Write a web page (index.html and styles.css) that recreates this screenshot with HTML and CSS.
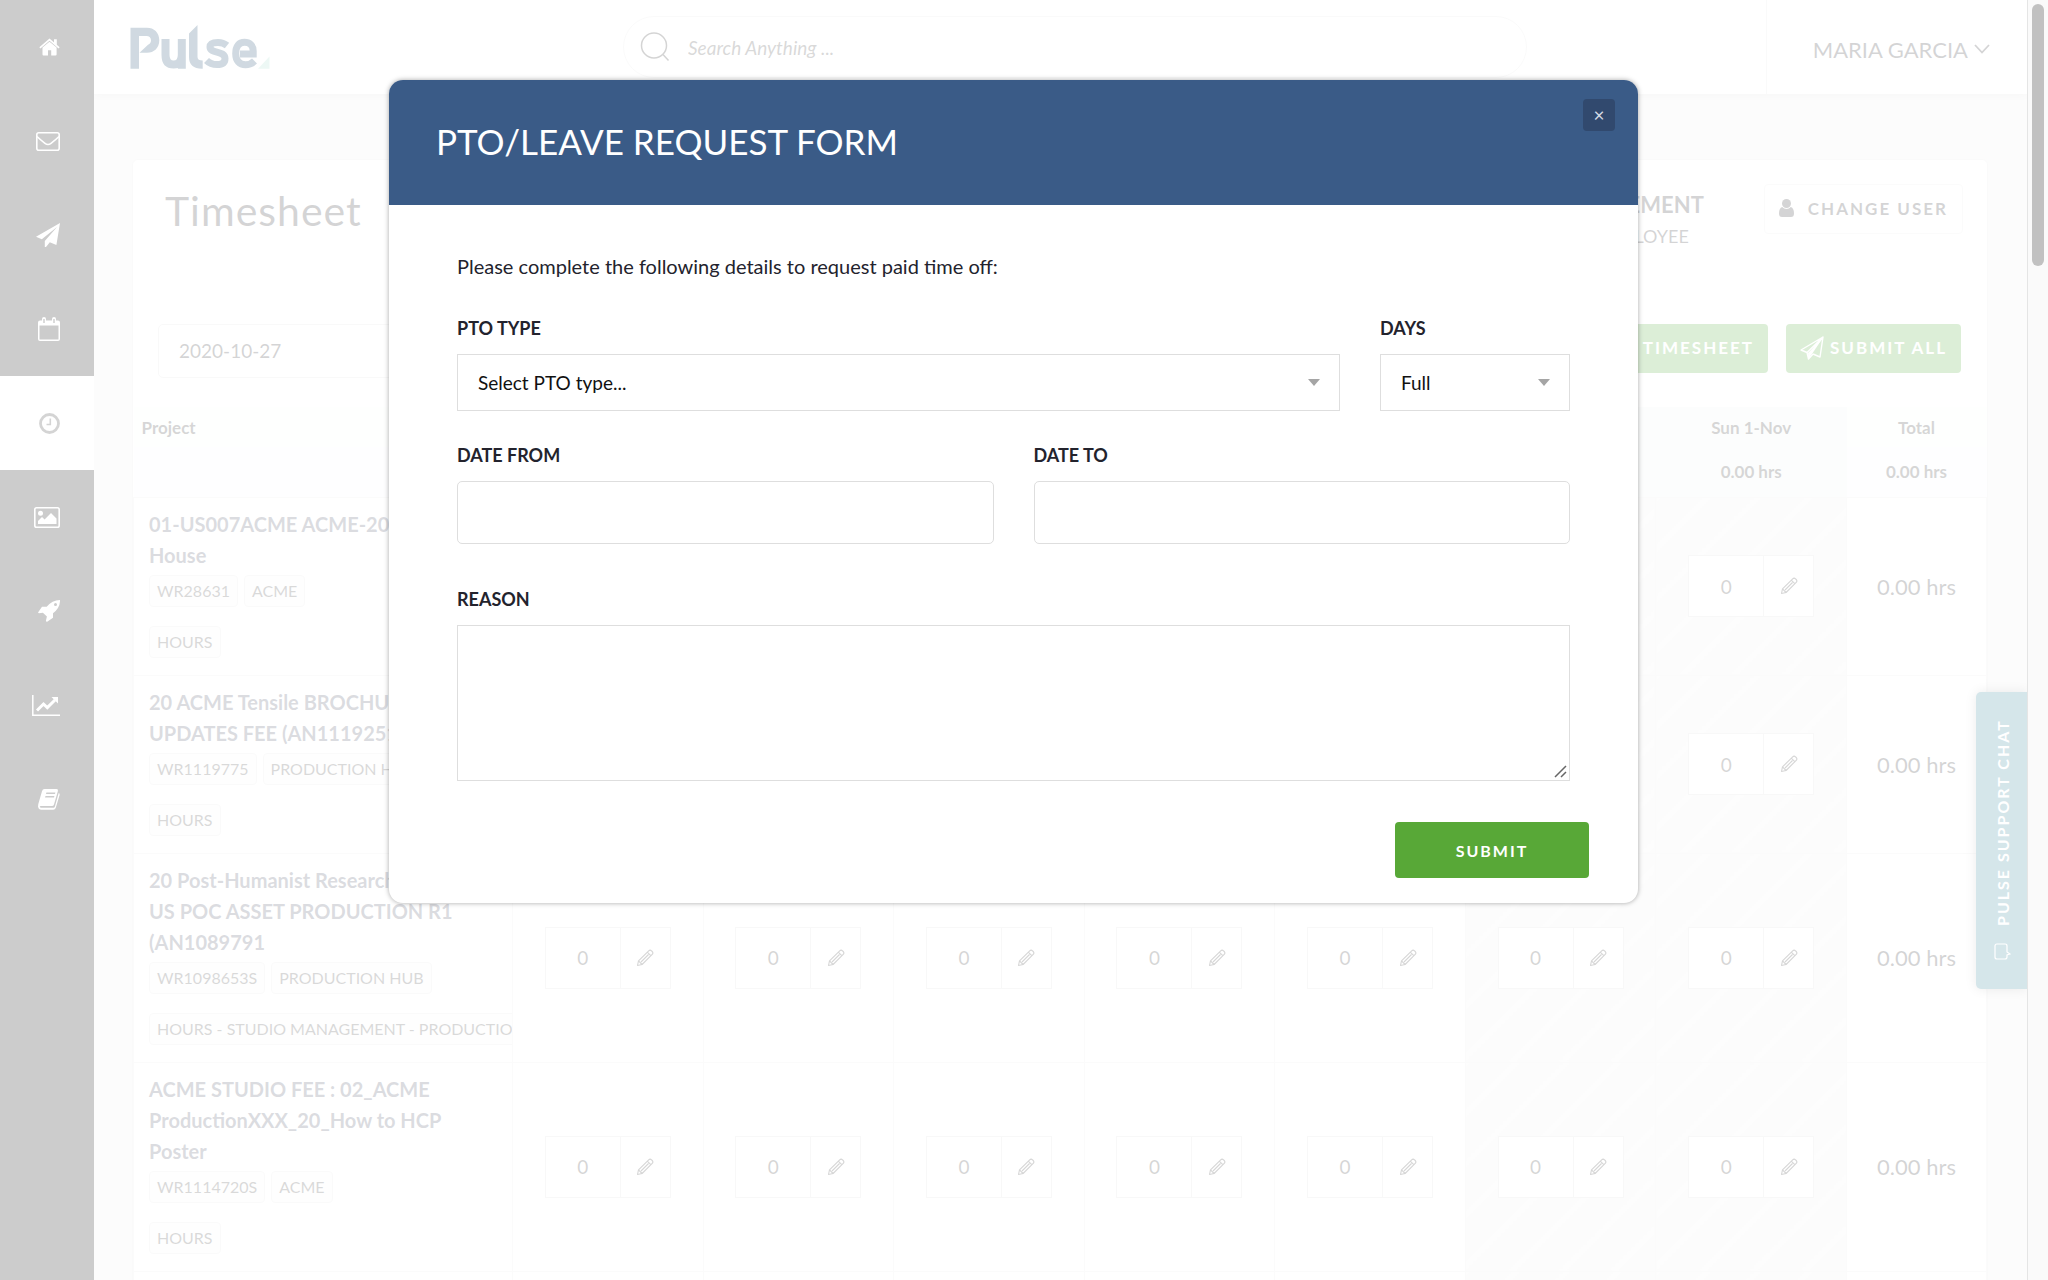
FILE: index.html
```html
<!DOCTYPE html>
<html lang="en">
<head>
<meta charset="utf-8">
<title>Pulse - Timesheet</title>
<link rel="stylesheet" href="styles.css">
</head>
<body>
<svg class="defs" aria-hidden="true">
  <symbol id="pencil" viewBox="0 0 18 18"><path d="M1.500 16.500l1-4.600L12.700 1.800a2 2 0 0 1 2.800 0l.7.700a2 2 0 0 1 0 2.800L6.100 15.500zM11.300 3.200l3.500 3.500M2.500 11.900l3.600 3.600M5 13L12.500 5.500" fill="none" stroke="currentColor" stroke-width="1.100" stroke-linejoin="round"/></symbol>
</svg>
<div class="app">
  <nav class="sidebar" aria-label="Main">
    <a class="nav-item" href="#home" aria-label="Home"><svg width="21" height="18" viewBox="0 0 21 18"><path d="M10.500 3.800L3.500 9.600V16.500q0 1 1 1H9v-5.300h3.200v5.300h4.400q1 0 1-1V9.600z"/><path d="M.9 9.800L10.500 1.700l9.600 8.100" fill="none" stroke="currentColor" stroke-width="1.700"/><path d="M15 1.200h2.800v6L15 4.800z"/></svg></a>
    <a class="nav-item" href="#mail" aria-label="Mail"><svg width="24" height="19" viewBox="0 0 24 19"><g fill="none" stroke="currentColor" stroke-width="1.600"><rect x=".8" y=".8" width="22.400" height="17.400" rx="2"/><path d="M1 4.500q3 3 8 6.800 3 2.300 6 0 5-3.800 8-6.800"/></g></svg></a>
    <a class="nav-item" href="#send" aria-label="Send"><svg width="24" height="24" viewBox="0 0 24 24"><path d="M24 0l-3.600 22-6.600-2.700L10 24H8.800v-6L21 4 5.800 16.200 0 13.700z"/></svg></a>
    <a class="nav-item" href="#calendar" aria-label="Calendar"><svg width="22" height="24" viewBox="0 0 22 24"><path d="M2 3.500h2V2a2 2 0 0 1 4 0v1.500h6V2a2 2 0 0 1 4 0v1.500h2q2 0 2 2V22q0 2-2 2H2q-2 0-2-2V5.500q0-2 2-2zM1.500 8.500v14h19v-14zM5.300 2v4h1.400V2zm10 0v4h1.400V2z" fill-rule="evenodd"/></svg></a>
    <a class="nav-item active" href="#time" aria-label="Timesheet"><svg width="21" height="21" viewBox="0 0 21 21"><g fill="none" stroke="currentColor"><circle cx="10.500" cy="10.500" r="9" stroke-width="2.800"/><path d="M11.300 5.500v6H7.500" stroke-width="1.600"/></g></svg></a>
    <a class="nav-item" href="#images" aria-label="Images"><svg width="26" height="21" viewBox="0 0 26 21"><rect x=".8" y=".8" width="24.400" height="19.400" rx="1.800" fill="none" stroke="currentColor" stroke-width="1.600"/><circle cx="6.500" cy="6.300" r="2.500"/><path d="M4 17v-3l4-4 2.600 2.500L17 6l5.500 5.500V17z"/></svg></a>
    <a class="nav-item" href="#launch" aria-label="Launch"><svg width="22" height="22" viewBox="0 0 22 22"><path d="M22 0q.3 7.500-7 13.200v4.600L8.800 22l-.9-1.200 1-4.300-4-3.800-4 .6L0 12.500l4-5.700h4.700Q14 .2 22 0zM17.500 3a1.500 1.500 0 1 0 0 3 1.500 1.500 0 0 0 0-3z" fill-rule="evenodd"/></svg></a>
    <a class="nav-item" href="#reports" aria-label="Reports"><svg width="28" height="21" viewBox="0 0 28 21"><path d="M.8 0v20.200H28" fill="none" stroke="currentColor" stroke-width="1.500"/><path d="M5 15.500l6.500-6.500 3.800 3.600L23 5" fill="none" stroke="currentColor" stroke-width="3"/><path d="M19.500 2H26v6.500z"/></svg></a>
    <a class="nav-item" href="#library" aria-label="Library"><svg width="22" height="21" viewBox="0 0 22 21"><path d="M6.500 0h12q2 0 1.400 2L16 15.500q-.5 1.500-2 1.500H3q-1.500 0-1.200 1 .2.800 1.500.8h12.200q1 0 1.400-1.200L20.700 4q1.300.5.9 2L17.800 18.800q-.6 2-2.600 2H3q-2.600-.3-3-3L.3 15 4 2.200Q4.600 0 6.500 0zM8.400 3.600L8 5h9l.4-1.400zM7.500 7L7 8.400h9l.4-1.400z" fill-rule="evenodd"/></svg></a>
  </nav>
  <div class="main">
    <header class="topbar">
      <a class="logo" href="#home" aria-label="Pulse"><svg width="140" height="46" viewBox="0 0 140 46">
        <g fill="#154468"><path d="M.5 3.700H17C24 3.700 29.300 8.500 29.300 16.200S24 28.700 17 28.700H9.500L18 20.700C20 20 21 18.500 21 16.200 21 13.500 19 12 16.500 12H9V44.700H.5z"/><path d="M59 9.500L67.500 1V33q0 3.500 5.200 3.500v8.200Q59 45 59 33z"/></g>
        <g fill="none" stroke="#154468" stroke-width="8"><path d="M35.500 15v16q0 9.500 8.100 9.500T51.800 31V15M51.800 30v14.700"/><path d="M97 21.500C94.500 19.500 92 18.400 88 18.400c-5 0-8 1.600-8 4.600 0 7 15 3 15 11.500 0 4.200-3 6.100-8 6.100-4.500 0-7.500-1.100-10.500-4.100" stroke-width="7"/><path d="M110 30h13.200v-3c0-5.500-3.700-8.700-8.700-8.700-5.500 0-8.800 3.700-8.800 11.200s3.800 11.200 9.800 11.200c3.500 0 6.500-1.200 9-3.700" stroke-width="7"/></g>
        <path d="M139.500 32.500v12.200H128z" fill="#a5dcca"/></svg></a>
      <label class="search"><svg width="30" height="31" viewBox="0 0 30 31"><path d="M14 1a12.500 12.500 0 1 0 0 25 12.500 12.500 0 1 0 0-25M23 22.500l5.500 6" fill="none" stroke="currentColor" stroke-width="1.500"/></svg><input type="search" placeholder="Search Anything ..." aria-label="Search"></label>
      <button class="user">MARIA GARCIA <svg width="16" height="10" viewBox="0 0 16 10"><path d="M1 1l7 7.500L15 1" fill="none" stroke="currentColor" stroke-width="1.800"/></svg></button>
    </header>
    <main class="card">
      <div class="card-head">
        <h1>Timesheet</h1>
        <div class="identity"><strong>MANAGEMENT</strong><span>EMPLOYEE</span></div>
        <button class="change"><svg width="15" height="18" viewBox="0 0 15 18"><circle cx="7.500" cy="4.500" r="4.500"/><path d="M3.200 8Q5 10 7.500 10t4.300-2Q15 9 15 14.500q0 3.500-3 3.500H3q-3 0-3-3.500Q0 9 3.200 8z"/></svg>CHANGE USER</button>
      </div>
      <div class="toolbar">
        <input class="date" type="text" value="2020-10-27" aria-label="Week of">
        <button class="green">TIMESHEET</button>
        <button class="green"><svg width="24" height="24" viewBox="0 0 24 24"><path d="M23 1L1 14l6 2.500L23 1l-3 20-7-3M7 16.500l1.500 6.500L13 18M23 1L10 17l-1.500 6" fill="none" stroke="currentColor" stroke-width="1.400" stroke-linejoin="round"/><path d="M8 17L22 3 12 18l-3.500 4z"/></svg>SUBMIT ALL</button>
      </div>
      <table class="sheet">
        <colgroup><col class="c-project"><col span="7"><col class="c-total"></colgroup>
        <thead>
          <tr class="days"><th scope="col" class="left">Project</th><th scope="col">Mon 26-Oct</th><th scope="col">Tue 27-Oct</th><th scope="col">Wed 28-Oct</th><th scope="col">Thu 29-Oct</th><th scope="col">Fri 30-Oct</th><th scope="col" class="off">Sat 31-Oct</th><th scope="col" class="off">Sun 1-Nov</th><th scope="col">Total</th></tr>
          <tr class="sums"><th></th><th>0.00 hrs</th><th>0.00 hrs</th><th>0.00 hrs</th><th>0.00 hrs</th><th>0.00 hrs</th><th class="off">0.00 hrs</th><th class="off">0.00 hrs</th><th>0.00 hrs</th></tr>
        </thead>
        <tbody id="rows"></tbody>
      </table>
    </main>
  </div>
  <button class="chat"><svg width="17" height="18" viewBox="0 0 17 18"><path d="M6 1h8q2 0 2 2v11q0 2-2 2H6q-2 0-2-2V8L1 6l3-1V3q0-2 2-2z" fill="none" stroke="currentColor" stroke-width="1.200"/></svg>PULSE SUPPORT CHAT</button>
  <div class="scrim"></div>
  <section class="modal" role="dialog" aria-labelledby="modal-title">
    <header class="modal-head"><h2 id="modal-title">PTO/LEAVE REQUEST FORM</h2><button class="close" aria-label="Close">×</button></header>
    <form class="form">
      <p>Please complete the following details to request paid time off:</p>
      <div class="line">
        <div class="field wide"><label for="type">PTO TYPE</label><select id="type"><option>Select PTO type...</option></select></div>
        <div class="field days-field"><label for="days">DAYS</label><select id="days"><option>Full</option></select></div>
      </div>
      <div class="line dates">
        <div class="field"><label for="from">DATE FROM</label><input id="from" type="text"></div>
        <div class="field"><label for="to">DATE TO</label><input id="to" type="text"></div>
      </div>
      <div class="field"><label for="reason">REASON</label><textarea id="reason"></textarea></div>
      <button class="submit" type="button">SUBMIT</button>
    </form>
  </section>
</div>
<div class="scrollbar"><div class="thumb"></div></div>
<script src="rows.js"></script>
</body>
</html>
```
FILE: styles.css
```css
* { box-sizing: border-box; }
body { margin: 0; height: 100vh; display: flex; overflow: hidden; background: #fff; font-family: Lato, "Open Sans", sans-serif; color: #2b2b2f; }
button, input, select, textarea { font: inherit; color: inherit; margin: 0; }
button { border: 0; background: none; padding: 0; cursor: pointer; }
svg { display: block; flex: none; fill: currentColor; }
.defs { position: absolute; width: 0; height: 0; }

.app { position: relative; flex: 1; min-width: 0; display: flex; overflow: hidden; background: #f0f0f0; }
.sidebar { width: 94px; flex: none; background: #000; color: #fff; }
.nav-item { height: 94px; padding-right: 34px; display: flex; align-items: center; justify-content: flex-end; color: #fff; }
.nav-item.active { background: #fff; color: #2b2b2b; }

.main { flex: 1; min-width: 0; }
.topbar { height: 94px; background: #fff; display: flex; box-shadow: 0 2px 8px #0000001a; position: relative; padding-left: 36px; }
.logo { align-self: center; }
.search { flex: 1; height: 62px; margin: 16px 239px 0 353px; padding: 0 16px; display: flex; align-items: center; gap: 18px; border: 1px solid #e6e6e6; border-radius: 31px; color: #2b2b2b; }
.search input { flex: 1; height: 60px; padding: 0; border: 0; outline: 0; background: none; font-size: 19px; font-style: italic; }
.search input::placeholder { color: #444; opacity: 1; }
.user { width: 261px; padding: 4px 37px 0 0; display: flex; align-items: center; justify-content: flex-end; gap: 6px; font-size: 22px; border-left: 1px solid #e6e6e6; }

.card { margin: 65px 39px 0 38px; border: 1px solid #e6e6e6; border-radius: 6px; background: #fff; }
.card-head { display: flex; align-items: flex-start; height: 164px; padding: 24px 24px 0 32px; }
h1 { margin: 0; font-size: 41px; font-weight: 400; letter-spacing: 1px; line-height: 54px; }
.identity { margin-left: auto; margin-right: 60px; text-align: right; line-height: 30px; display: flex; flex-direction: column; padding-top: 6px; }
.identity strong { font-size: 22px; }
.identity span { font-size: 18px; padding-right: 15px; line-height: 32px; }
.change { height: 50px; padding: 0 14px 2px; display: flex; align-items: center; gap: 14px; border: 1px solid #ececec; border-radius: 4px; font-size: 17px; font-weight: 700; letter-spacing: 2px; }
.toolbar { display: flex; gap: 18px; height: 83px; padding: 0 26px 0 25px; }
.date { width: 300px; height: 54px; margin-right: auto; padding: 0 20px 2px; font-size: 19px; border: 1px solid #e0e0e0; border-radius: 5px; }
.green { height: 49px; padding: 0 14px 2px; display: flex; align-items: center; gap: 6px; border-radius: 4px; background: #4fab39; color: #fff; font-size: 17px; font-weight: 700; letter-spacing: 2px; }

.sheet { width: 100%; table-layout: fixed; border-collapse: collapse; }
.c-project { width: 379px; }
.c-total { width: 140px; }
.sheet th { padding: 0; font-size: 17px; font-weight: 700; color: #333; }
.sheet .left { text-align: left; padding-left: 8px; }
.days th { height: 40px; background: #f7fdfa; }
.sums th { height: 50px; background: #f8f8ff; }
.sheet thead .off { background: #eff6f3; }
.sheet td { padding: 0; border: 1px solid #e8e8e8; vertical-align: middle; text-align: center; }
.sheet .off-cell { background: repeating-linear-gradient(135deg, #f2f2f2, #eeeeee 18px, #f2f2f2 36px); }
.sheet .project { text-align: left; padding: 11px 0 17px 15px; overflow: hidden; white-space: nowrap; }
.project strong { display: block; font-size: 20px; line-height: 31px; color: #4b5064; }
.tags { display: flex; gap: 6px; margin-top: 4px; }
.tags + .tags { margin-top: 19px; }
.tags span { flex: none; height: 32px; padding: 0 7px; font-size: 16px; line-height: 30px; color: #444; border: 1px solid #e6e6e6; border-radius: 4px; background: #f8f8f8; }
.entry { width: 126px; height: 62px; margin: 0 auto; display: flex; border: 1px solid #dcdcdc; background: #fff; color: #333; }
.entry input { width: 75px; border: 0; border-right: 1px solid #dcdcdc; background: none; text-align: center; font-size: 19px; }
.entry button { flex: 1; display: grid; place-items: center; }
.sheet .total { font-size: 22px; }

.chat { position: absolute; right: 0; top: 692px; width: 51px; height: 297px; padding: 29px 2px 0 0; writing-mode: vertical-rl; transform: rotate(180deg); display: flex; align-items: center; gap: 16px; border-radius: 0 5px 5px 0; background: #2f8097; color: #fff; font-size: 16px; font-weight: 700; letter-spacing: 2px; box-shadow: 0 0 12px #0006; }
.scrim { position: absolute; inset: 0; background: #ffffffcc; }

.modal { position: absolute; top: 80px; left: 389px; right: 389px; background: #fff; border-radius: 14px; overflow: hidden; box-shadow: 0 0 5px #00000059; color: #23232d; }
.modal-head { height: 125px; padding: 0 23px 0 47px; display: flex; align-items: center; justify-content: space-between; background: #3a5b87; color: #fff; }
h2 { margin: 0; padding-bottom: 3px; font-size: 35px; font-weight: 400; }
.close { align-self: flex-start; width: 32px; height: 32px; margin-top: 19px; border-radius: 4px; background: #31496e; color: #d5dbe5; font-size: 19px; line-height: 32px; }
.form { padding: 47px 68px 25px; }
.form p { margin: 0 0 33px; font-size: 20px; line-height: 29px; }
.line { display: flex; gap: 40px; margin-bottom: 30px; }
.line.dates { margin-bottom: 41px; }
.field { flex: 1; display: flex; flex-direction: column; }
.field label { font-size: 18px; font-weight: 700; line-height: 28px; margin-bottom: 12px; }
.days-field { flex: 0 0 190px; }
.field select, .field input, .field textarea { width: 100%; border: 1px solid #dedede; background: #fff; color: #111; font-size: 19px; outline: 0; }
.field select { height: 57px; padding: 0 20px; border-radius: 0; appearance: none; background: #fff url("data:image/svg+xml,%3Csvg xmlns='http://www.w3.org/2000/svg' width='12' height='7'%3E%3Cpath d='M0 0h12L6 7z' fill='%23a5a5a5'/%3E%3C/svg%3E") right 19px center no-repeat; }
.field input { height: 63px; padding: 0 20px; border-radius: 5px; }
.field textarea { height: 156px; padding: 16px 20px; resize: vertical; }
.field textarea::-webkit-resizer { background: url("data:image/svg+xml,%3Csvg xmlns='http://www.w3.org/2000/svg' width='15' height='15'%3E%3Cpath d='M1 12L12 1M7 12l5-5' stroke='%23666' stroke-width='1.500'/%3E%3C/svg%3E") no-repeat; }
.submit { display: block; width: 194px; height: 56px; margin: 41px -19px 0 auto; border-radius: 4px; background: #58a837; color: #fff; font-size: 16px; font-weight: 700; letter-spacing: 2px; }

.scrollbar { width: 21px; flex: none; padding: 4px; border-left: 1px solid #e5e5e5; background: #fafafa; }
.thumb { height: 262px; border-radius: 6px; background: #c1c1c1; }
```
FILE: rows.js
```javascript
const rows = [
  { title: ["01-US007ACME ACME-2020", "House"], tags: ["WR28631", "ACME"], task: "HOURS" },
  { title: ["20 ACME Tensile BROCHURE", "UPDATES FEE (AN1119251"], tags: ["WR1119775", "PRODUCTION HUB"], task: "HOURS" },
  { title: ["20 Post-Humanist Research", "US POC ASSET PRODUCTION R1", "(AN1089791"], tags: ["WR1098653S", "PRODUCTION HUB"], task: "HOURS - STUDIO MANAGEMENT - PRODUCTION" },
  { title: ["ACME STUDIO FEE : 02_ACME", "ProductionXXX_20_How to HCP", "Poster"], tags: ["WR1114720S", "ACME"], task: "HOURS" },
  { title: ["ACME STUDIO FEE"], tags: ["ACME"], task: "HOURS" }
];
const entry = (title, day) =>
  `<td${day > 4 ? ' class="off-cell"' : ""}><div class="entry"><input value="0" aria-label="Hours, ${title}, day ${day + 1}"><button aria-label="Edit note"><svg width="18" height="18"><use href="#pencil"/></svg></button></div></td>`;
document.getElementById("rows").innerHTML = rows.map(r => `<tr>
  <td class="project"><strong>${r.title.join("<br>")}</strong>
  <div class="tags">${r.tags.map(t => `<span>${t}</span>`).join("")}</div>
  <div class="tags"><span>${r.task}</span></div></td>
  ${[0, 1, 2, 3, 4, 5, 6].map(d => entry(r.title[0], d)).join("")}
  <td class="total">0.00 hrs</td></tr>`).join("");
```
